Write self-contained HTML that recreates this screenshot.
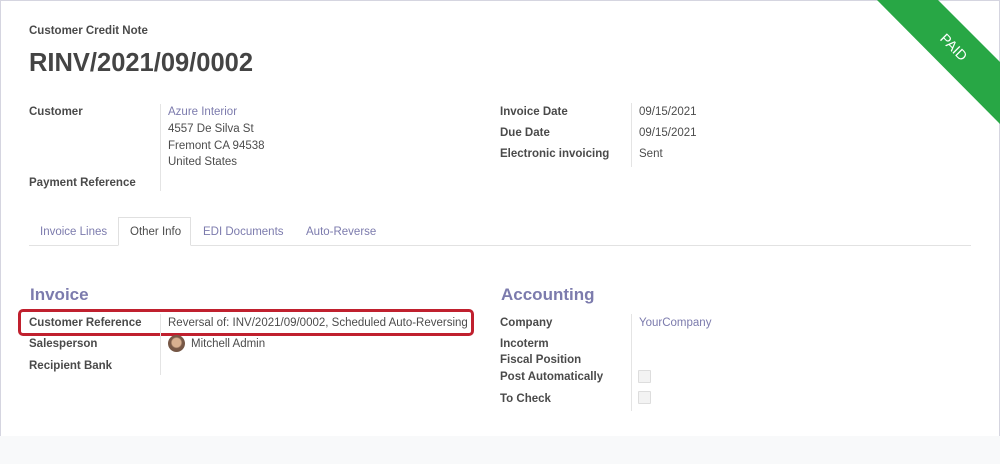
<!DOCTYPE html>
<html><head><style>
html,body{margin:0;padding:0;}
body{width:1000px;height:464px;background:#f8f9fa;position:relative;overflow:hidden;font-family:"Liberation Sans",sans-serif;color:#4c4c4c;font-size:11.5px;}
.sheet{position:absolute;left:0;top:0;width:1000px;height:436px;background:#fff;overflow:hidden;}
.frame{position:absolute;left:0;top:0;width:998px;height:436px;border:1px solid #d5d5e0;border-bottom:none;}
.in{position:absolute;left:0;top:1px;width:1000px;height:436px;}
.t{position:absolute;line-height:16px;white-space:nowrap;}
.b{font-weight:bold;color:#4a4a4a;}
.l{color:#7c7bad;}
.vl{position:absolute;width:1px;background:#e4e4e4;}
.cb{position:absolute;width:11px;height:11px;border:1px solid #ddd;background:#f3f3f3;border-radius:1px;}
</style></head><body>
<div class="sheet">
<div class="frame"></div>
<div class="in">
<div class="t b" style="left:29px;top:22px">Customer Credit Note</div>
<div class="t b" style="left:29px;top:47px;font-size:25.5px;line-height:30px;color:#444">RINV/2021/09/0002</div>

<div class="t b" style="left:29px;top:103px">Customer</div>
<div class="vl" style="left:160px;top:103px;height:87px"></div>
<div class="t l" style="left:168px;top:103px">Azure Interior</div>
<div class="t" style="left:168px;top:120px">4557 De Silva St</div>
<div class="t" style="left:168px;top:137px">Fremont CA 94538</div>
<div class="t" style="left:168px;top:153px">United States</div>
<div class="t b" style="left:29px;top:174px">Payment Reference</div>

<div class="t b" style="left:500px;top:103px">Invoice Date</div>
<div class="t b" style="left:500px;top:124px">Due Date</div>
<div class="t b" style="left:500px;top:145px">Electronic invoicing</div>
<div class="vl" style="left:631px;top:102px;height:64px"></div>
<div class="t" style="left:639px;top:103px">09/15/2021</div>
<div class="t" style="left:639px;top:124px">09/15/2021</div>
<div class="t" style="left:639px;top:145px">Sent</div>

<div style="position:absolute;left:29px;top:244px;width:942px;height:1px;background:#e2e2e2"></div>
<div style="position:absolute;left:118px;top:216px;width:73px;height:29px;border:1px solid #e0e0e0;border-bottom:1px solid #fff;background:#fff;box-sizing:border-box"></div>
<div class="t l" style="left:40px;top:223px">Invoice Lines</div>
<div class="t" style="left:130px;top:223px">Other Info</div>
<div class="t l" style="left:203px;top:223px">EDI Documents</div>
<div class="t l" style="left:306px;top:223px">Auto-Reverse</div>

<div class="t" style="left:30px;top:284px;font-size:17px;line-height:20px;font-weight:bold;color:#7c7bad">Invoice</div>
<div class="t" style="left:501px;top:284px;font-size:17px;line-height:20px;font-weight:bold;color:#7c7bad">Accounting</div>

<div style="position:absolute;left:18px;top:308px;width:450px;height:21px;border:3px solid #c0202e;border-radius:5px"></div>
<div class="t b" style="left:29px;top:314px">Customer Reference</div>
<div class="vl" style="left:160px;top:313px;height:61px"></div>
<div class="t" style="left:168px;top:314px">Reversal of: INV/2021/09/0002, Scheduled Auto-Reversing</div>
<div class="t b" style="left:29px;top:335px">Salesperson</div>
<div style="position:absolute;left:168px;top:334px;width:17px;height:17px;border-radius:50%;background:radial-gradient(circle at 50% 45%,#d8b090 0 35%,#7a5a48 45%,#6b4f40 100%)"></div>
<div class="t" style="left:191px;top:335px">Mitchell Admin</div>
<div class="t b" style="left:29px;top:357px">Recipient Bank</div>

<div class="t b" style="left:500px;top:314px">Company</div>
<div class="vl" style="left:631px;top:313px;height:97px"></div>
<div class="t l" style="left:639px;top:314px">YourCompany</div>
<div class="t b" style="left:500px;top:335px">Incoterm</div>
<div class="t b" style="left:500px;top:351px">Fiscal Position</div>
<div class="t b" style="left:500px;top:368px">Post Automatically</div>
<div class="cb" style="left:638px;top:369px"></div>
<div class="t b" style="left:500px;top:390px">To Check</div>
<div class="cb" style="left:638px;top:390px"></div>
</div>

<svg style="position:absolute;left:0;top:0" width="1000" height="464">
<polygon points="876,-1 937,-1 1000,62 1000,124" fill="#28a745"/>
<text x="0" y="0" transform="translate(953,48) rotate(45)" fill="#fff" font-family="Liberation Sans, sans-serif" font-size="14" text-anchor="middle" dominant-baseline="middle">PAID</text>
</svg>
</div>
</body></html>
